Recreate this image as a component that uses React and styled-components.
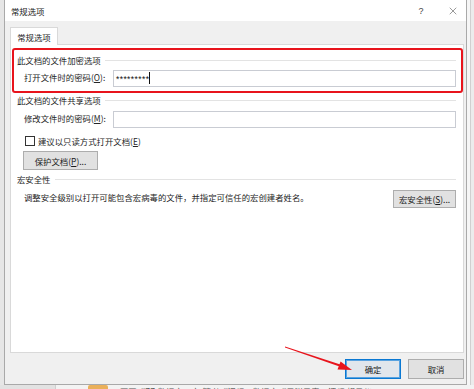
import React from 'react'
import styled, { createGlobalStyle } from 'styled-components'
import { X } from 'lucide-react'

const GlobalStyle = createGlobalStyle`
  html, body {
    margin: 0;
    padding: 0;
    overflow: hidden;
    background: #e6e6e6;
  }
  body {
    font-family: "Noto Sans CJK SC", "Noto Sans", sans-serif;
    font-size: 8.4px;
    color: #262626;
  }
`

const Page = styled.div`
  position: relative;
  width: 474px;
  height: 389px;
  display: flex;
  flex-direction: column;
  background: #e6e6e6;
  overflow: hidden;
`

const Top = styled.div`
  display: flex;
  height: 385px;
  padding-left: 4px;
`

const Dialog = styled.div`
  width: 463px;
  height: 385px;
  box-sizing: border-box;
  border: 1px solid #a9a9a9;
  border-top: none;
  display: flex;
  flex-direction: column;
  background: #f0f0f0;
`

const TitleBar = styled.div`
  height: 21px;
  background: #fff;
  display: flex;
  align-items: center;
  padding-left: 6px;
  color: #1a1a1a;
`

const Title = styled.span`
  flex: 1;
  line-height: 12px;
`

const Help = styled.span`
  width: 10px;
  text-align: center;
  font-family: "Liberation Sans", sans-serif;
  font-size: 9px;
  color: #444;
  margin-right: 21px;
`

const Close = styled.span`
  display: flex;
  width: 12px;
  margin-right: 7px;
  color: #555;
`

const Body = styled.div`
  flex: 1;
  display: flex;
  flex-direction: column;
  padding: 0 2px 0 5px;
`

const TabRow = styled.div`
  display: flex;
  padding-top: 6px;
`

const Tab = styled.div`
  position: relative;
  z-index: 1;
  width: 46px;
  height: 17px;
  margin-bottom: -1px;
  background: #fff;
  border: 1px solid #d9d9d9;
  border-bottom: none;
  display: flex;
  align-items: center;
  justify-content: center;
`

const Panel = styled.div`
  height: 309px;
  box-sizing: border-box;
  background: #fff;
  border: 1px solid #d9d9d9;
  padding: 3px 7px 0 6px;
  display: flex;
  flex-direction: column;
`

const RedBox = styled.div`
  margin: 0 -7px 0 -5px;
  padding: 3px 5px 4px 3px;
  border: 2px solid #e8141c;
  border-radius: 3px;
  display: flex;
  flex-direction: column;
`

const Header = styled.div`
  display: flex;
  align-items: center;
  height: 14px;
  gap: 4px;
  margin-top: ${(p) => p.top || 0}px;

  &::after {
    content: "";
    flex: 1;
    height: 1px;
    background: #e3e3e3;
  }
`

const FieldRow = styled.div`
  display: flex;
  align-items: center;
  height: 18px;
  padding-left: 7px;
  margin-top: ${(p) => p.top || 0}px;
`

const Label = styled.span`
  width: 89px;
  flex-shrink: 0;
  margin-top: -2px;
`

const Input = styled.div`
  flex: 1;
  height: 17px;
  box-sizing: border-box;
  border: 1px solid #c9ccd3;
  background: #fff;
  display: flex;
  align-items: center;
  padding-left: 2px;
`

const Stars = styled.span`
  font-family: "Liberation Sans", sans-serif;
  font-size: 8.5px;
  letter-spacing: 0.4px;
  line-height: 10px;
  margin-top: 2px;
  color: #111;
`

const Caret = styled.span`
  width: 1px;
  height: 12px;
  background: #111;
`

const CheckRow = styled.label`
  display: flex;
  align-items: center;
  height: 14px;
  gap: 3px;
  padding-left: 8px;
  margin-top: 6px;
`

const Box = styled.span`
  width: 8px;
  height: 8px;
  border: 1px solid #333;
  background: #fff;
`

const Button = styled.div`
  height: ${(p) => p.h || 19}px;
  width: ${(p) => p.w}px;
  box-sizing: border-box;
  background: ${(p) => (p.primary ? '#e1e6ec' : '#e1e1e1')};
  border: 1px solid ${(p) => (p.primary ? '#0a78d2' : '#adadad')};
  box-shadow: ${(p) => (p.primary ? 'inset 0 0 0 1px #5aa3e0' : 'none')};
  display: flex;
  align-items: center;
  justify-content: center;
  flex-shrink: 0;
  color: #1a1a1a;
`

const ButtonRow = styled.div`
  display: flex;
  padding-left: 6px;
  margin-top: 3px;
`

const MacroRow = styled.div`
  display: flex;
  align-items: flex-start;
  justify-content: space-between;
  padding-left: 7px;
  margin-top: 4px;
`

const Desc = styled.span`
  line-height: 14px;
`

const Footer = styled.div`
  display: flex;
  justify-content: flex-end;
  gap: 7px;
  padding-top: 6px;
`

const RightStrip = styled.div`
  flex: 1;
  background: #ececec;
  border-left: 3px solid #f6f6f6;
  box-shadow: inset 1px 0 0 #d0d0d0;
`

const BottomStrip = styled.div`
  flex: 1;
  display: flex;
  overflow: hidden;
  background: #f3f3f3;
`

const Gutter = styled.div`
  width: 55px;
  background: #e2e2e2;
  border-right: 1px solid #cfcfcf;
`

const Orange = styled.div`
  width: 20px;
  margin-left: 32px;
  background: #eab05a;
  border-radius: 2px 2px 0 0;
`

const DocText = styled.div`
  margin-left: 12px;
  white-space: nowrap;
  color: #555;
  font-size: 8.4px;
  line-height: 12px;
`

const Annotation = styled.svg`
  position: absolute;
  left: 0;
  top: 0;
  pointer-events: none;
`

export default function App() {
  return (
    <Page>
      <GlobalStyle />
      <Top>
        <Dialog>
          <TitleBar>
            <Title>常规选项</Title>
            <Help>?</Help>
            <Close><X size={12} strokeWidth={1.2} /></Close>
          </TitleBar>
          <Body>
            <TabRow>
              <Tab>常规选项</Tab>
            </TabRow>
            <Panel>
              <RedBox>
                <Header>此文档的文件加密选项</Header>
                <FieldRow top={2}>
                  <Label>打开文件时的密码(<u>O</u>):</Label>
                  <Input>
                    <Stars>*********</Stars>
                    <Caret />
                  </Input>
                </FieldRow>
              </RedBox>
              <Header>此文档的文件共享选项</Header>
              <FieldRow top={3}>
                <Label>修改文件时的密码(<u>M</u>):</Label>
                <Input />
              </FieldRow>
              <CheckRow>
                <Box />
                <span>建议以只读方式打开文档(<u>E</u>)</span>
              </CheckRow>
              <ButtonRow>
                <Button w={75}>保护文档(<u>P</u>)...</Button>
              </ButtonRow>
              <Header top={2}>宏安全性</Header>
              <MacroRow>
                <Desc>调整安全级别以打开可能包含宏病毒的文件，并指定可信任的宏创建者姓名。</Desc>
                <Button w={63} h={18}>宏安全性(<u>S</u>)...</Button>
              </MacroRow>
            </Panel>
            <Footer>
              <Button w={56} h={20} primary>确定</Button>
              <Button w={56} h={20}>取消</Button>
            </Footer>
          </Body>
        </Dialog>
        <RightStrip />
      </Top>
      <BottomStrip>
        <Gutter />
        <Orange />
        <DocText>圆圆『ZZ-数据文』文-繁考『课程』数据文『只附录表』课程  规日仪...</DocText>
      </BottomStrip>
      <Annotation width="474" height="389" viewBox="0 0 474 389">
        <polygon points="285,346.6 285,347.4 339.5,366.6 340.3,364.4" fill="#e8141c" />
        <polygon points="352,370 337.5,369.4 340.6,361.5" fill="#e8141c" />
      </Annotation>
    </Page>
  )
}
